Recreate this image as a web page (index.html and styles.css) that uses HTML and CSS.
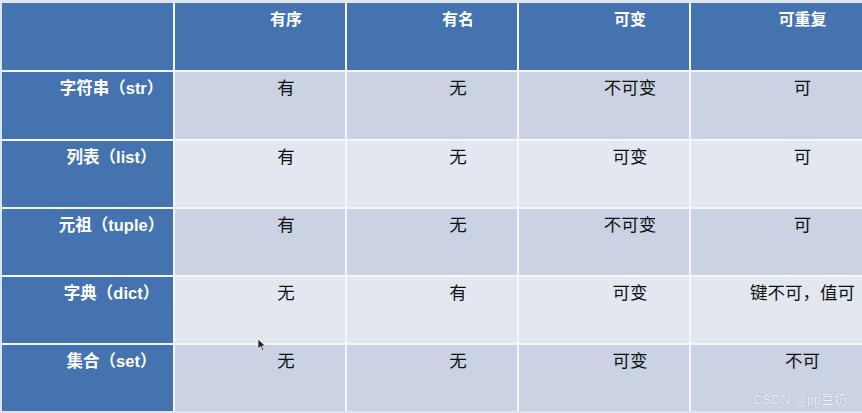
FILE: index.html
```html
<!DOCTYPE html>
<html lang="zh">
<head>
<meta charset="utf-8">
<title>数据类型对比</title>
<link rel="stylesheet" href="styles.css">
</head>
<body>
<div class="page">
  <div class="table">
    <div class="cell head corner"></div>
    <div class="cell head">有序</div>
    <div class="cell head">有名</div>
    <div class="cell head">可变</div>
    <div class="cell head">可重复</div>

    <div class="cell rowhead">字符串（str）</div>
    <div class="cell odd">有</div>
    <div class="cell odd">无</div>
    <div class="cell odd">不可变</div>
    <div class="cell odd">可</div>

    <div class="cell rowhead">列表（list）</div>
    <div class="cell even">有</div>
    <div class="cell even">无</div>
    <div class="cell even">可变</div>
    <div class="cell even">可</div>

    <div class="cell rowhead">元祖（tuple）</div>
    <div class="cell odd">有</div>
    <div class="cell odd">无</div>
    <div class="cell odd">不可变</div>
    <div class="cell odd">可</div>

    <div class="cell rowhead">字典（dict）</div>
    <div class="cell even">无</div>
    <div class="cell even">有</div>
    <div class="cell even">可变</div>
    <div class="cell even">键不可，值可</div>

    <div class="cell rowhead">集合（set）</div>
    <div class="cell odd">无</div>
    <div class="cell odd">无</div>
    <div class="cell odd">可变</div>
    <div class="cell odd">不可</div>
  </div>
  <svg class="cursor" width="10" height="14" viewBox="0 0 10 14"><path d="M1 1 L1 11 L3.5 8.5 L5.5 13 L7 12.3 L5 8 L8.5 8 Z" fill="#222" stroke="#eee" stroke-width="0.8"/></svg>
  <div class="watermark">CSDN @pp豆奶</div>
</div>
</body>
</html>
```
FILE: styles.css
```css
html, body {
  margin: 0;
  padding: 0;
  background: #e9edf4;
}
.page {
  position: relative;
  width: 862px;
  height: 413px;
  overflow: hidden;
  padding: 3px 0 0 2px;
  box-sizing: border-box;
  background: #dfe5ef;
}
.table {
  display: grid;
  grid-template-columns: 171px 170px 170px 170px 1fr;
  grid-template-rows: 67px 67px 66px 66px 66px 66px;
  gap: 2px;
  background: #f4f6fa;
  font-family: "Liberation Sans", "Noto Sans CJK SC", sans-serif;
}
.cell {
  font-size: 17.5px;
  line-height: 20px;
  text-align: center;
  padding: 6px 0 0 52px;
  color: #111;
  font-weight: 400;
}
.head {
  background: #4473b0;
  color: #fff;
  font-weight: 700;
  font-size: 16px;
  padding-top: 7px;
}
.rowhead {
  background: #4473b0;
  color: #fff;
  font-weight: 700;
  font-size: 16.5px;
  padding-left: 48px;
}
.odd {
  background: #cad2e4;
}
.even {
  background: #e3e7f0;
}
.cursor {
  position: absolute;
  left: 257px;
  top: 338px;
}
.watermark {
  position: absolute;
  left: 753px;
  top: 389px;
  font-family: "Liberation Sans", "Noto Sans CJK SC", sans-serif;
  font-size: 13px;
  color: rgba(248, 249, 252, 0.95);
  text-shadow: 0 0 1px rgba(90, 100, 120, 0.6);
}
```
